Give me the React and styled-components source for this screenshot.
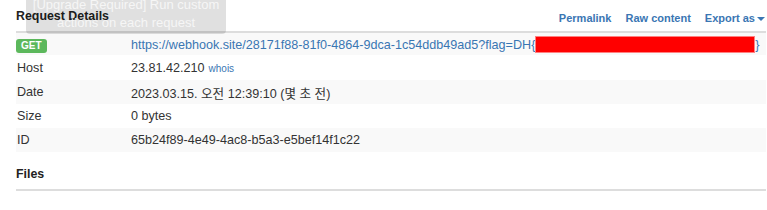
import React from "react";
import styled, { createGlobalStyle } from "styled-components";

const GlobalStyle = createGlobalStyle`
  body {
    margin: 0;
    background: #fff;
    font-family: "Liberation Sans", Arial, "Noto Sans CJK KR", sans-serif;
    color: #333;
  }
`;

const rows = [
  { label: "Host", value: "23.81.42.210", whois: true, height: 25 },
  { label: "Date", value: "2023.03.15. 오전 12:39:10 (몇 초 전)", height: 24 },
  { label: "Size", value: "0 bytes", height: 24 },
  { label: "ID", value: "65b24f89-4e49-4ac8-b5a3-e5bef14f1c22", height: 24 },
];

const App = () => {
  return (
    <Page>
      <GlobalStyle />
      <Header>
        <Title>Request Details</Title>
        <Links>
          <TopLink href="#">Permalink</TopLink>
          <TopLink href="#">Raw content</TopLink>
          <TopLink href="#">
            Export as <Caret />
          </TopLink>
        </Links>
      </Header>
      <Table>
        <Row $striped $height={22}>
          <Label>
            <Badge>GET</Badge>
          </Label>
          <Value>
            <UrlLink href="#">
              {"https://webhook.site/28171f88-81f0-4864-9dca-1c54ddb49ad5?flag=DH{"}
              <Redacted />
              {"}"}
            </UrlLink>
          </Value>
        </Row>
        {rows.map((r, i) => (
          <Row key={r.label} $striped={i % 2 === 1} $height={r.height}>
            <Label>{r.label}</Label>
            <Value>
              {r.value}
              {r.whois && <Whois href="#">whois</Whois>}
            </Value>
          </Row>
        ))}
      </Table>
      <Files>Files</Files>
      <Tooltip>
        [Upgrade Required] Run custom
        <br />
        actions on each request
      </Tooltip>
    </Page>
  );
};

const Page = styled.div`
  position: relative;
  padding: 0 1px 0 16px;
  width: 750px;
`;

const Header = styled.div`
  display: flex;
  justify-content: space-between;
  align-items: flex-end;
  height: 31px;
`;

const Title = styled.div`
  font-size: 12.4px;
  font-weight: bold;
  line-height: 14px;
  margin-bottom: 8px;
  color: #222;
`;

const Links = styled.div`
  display: flex;
  gap: 14px;
  margin-right: 1px;
  margin-bottom: 6px;
`;

const TopLink = styled.a`
  font-size: 11px;
  font-weight: bold;
  line-height: 13px;
  color: #3a76b3;
  text-decoration: none;
  display: flex;
  align-items: center;
  gap: 2px;
`;

const Caret = styled.span`
  display: inline-block;
  width: 0;
  height: 0;
  border-left: 4px solid transparent;
  border-right: 4px solid transparent;
  border-top: 4px solid #3a76b3;
  margin-top: 1px;
`;

const Table = styled.div`
  border-top: 2px solid #ddd;
`;

const Row = styled.div`
  display: flex;
  align-items: center;
  height: ${(p) => p.$height}px;
  background: ${(p) => (p.$striped ? "#f9f9f9" : "#fff")};
  font-size: 12.6px;
`;

const Label = styled.div`
  width: 114px;
  padding-left: 1px;
  display: flex;
  align-items: center;
`;

const Value = styled.div`
  flex: 1;
  white-space: nowrap;
  color: #333;
`;

const Badge = styled.span`
  display: inline-block;
  background: #5cb85c;
  color: #fff;
  font-size: 10px;
  font-weight: bold;
  line-height: 14px;
  padding: 0 5px;
  border-radius: 3px;
  margin-top: 3px;
  margin-left: -1px;
`;

const UrlLink = styled.a`
  color: #3a76b3;
  text-decoration: none;
`;

const Redacted = styled.span`
  display: inline-block;
  width: 218px;
  height: 15px;
  background: #ff0000;
  border: 1px solid #ff8080;
  vertical-align: -4px;
`;

const Whois = styled.a`
  font-size: 10px;
  color: #3a76b3;
  text-decoration: none;
  margin-left: 4px;
`;

const Files = styled.div`
  margin-top: 11px;
  padding: 4px 0 8px 0;
  font-size: 12.4px;
  font-weight: bold;
  line-height: 14px;
  color: #222;
  border-bottom: 2px solid #ddd;
`;

const Tooltip = styled.div`
  position: absolute;
  left: 26px;
  top: -8px;
  width: 200px;
  padding: 4px 0 2px;
  box-sizing: border-box;
  text-align: center;
  font-size: 13px;
  line-height: 18px;
  color: #f6f6f6;
  background: rgba(0, 0, 0, 0.12);
  border-radius: 4px;
`;

export default App;
